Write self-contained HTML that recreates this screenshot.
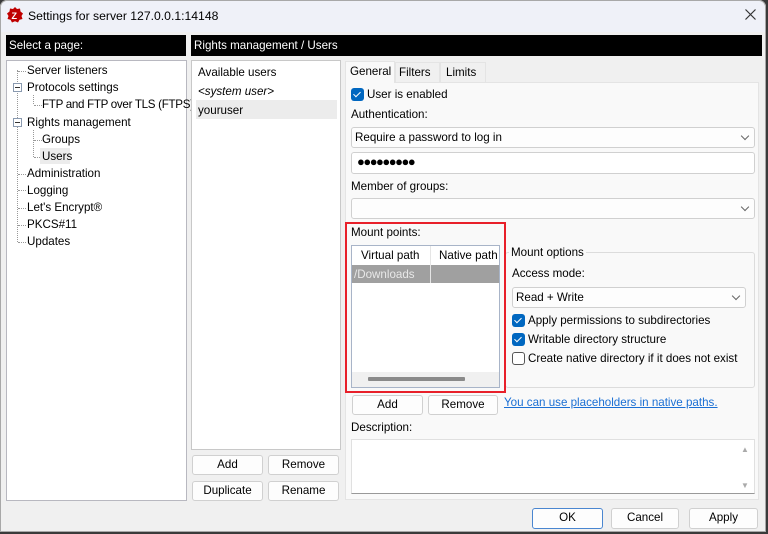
<!DOCTYPE html>
<html><head><style>
*{box-sizing:border-box;margin:0;padding:0}
body{width:768px;height:534px;background:#3a3a3a;font-family:"Liberation Sans",sans-serif;font-size:11.6px;color:#000;position:relative;overflow:hidden}
.a{position:absolute}
.win{position:absolute;left:0;top:0;width:766px;height:532px;background:#f0f0f0;border-radius:7px 7px 0 0;overflow:hidden;box-shadow:inset 0 0 0 1px #a8a8a8}
.t{position:absolute;white-space:nowrap;line-height:14px}
.box{position:absolute;background:#fff;border:1px solid #c8c8c8}
.btn{position:absolute;background:#fdfdfd;border:1px solid #d0d0d0;border-radius:3px;text-align:center;line-height:18px}
.cb{position:absolute;width:13px;height:13px;border-radius:3px;background:#0067c0}
.cb:after{content:"";position:absolute;left:4px;top:2px;width:3px;height:6px;border:solid #fff;border-width:0 1.5px 1.5px 0;transform:rotate(45deg)}
.cbu{position:absolute;width:13px;height:13px;border-radius:3px;border:1px solid #555;background:#fff}
.combo{position:absolute;background:#fdfdfd;border:1px solid #d0d0d0;border-radius:3px}
.chev{position:absolute;right:6px;top:5px;width:6px;height:6px;border:solid #666;border-width:0 1px 1px 0;transform:rotate(45deg)}
.dv{position:absolute;border-left:1px dotted #999}
.dh{position:absolute;border-top:1px dotted #999;width:8px}
.exp{position:absolute;width:9px;height:9px;border:1px solid #8a9ab0;background:#fff}
.exp:after{content:"";position:absolute;left:1px;top:3px;width:5px;height:1px;background:#333}
</style></head><body>
<div class="win">
<div class="a" style="left:1px;top:1px;width:764px;height:31px;background:#eff1f8;border-radius:7px 7px 0 0"></div>
<svg class="a" style="left:7px;top:7px" width="16" height="16" viewBox="0 0 16 16"><polygon points="8,0 10,2 13,1.5 13.5,4.5 16,6.5 14.5,9 15.5,12 12.5,12.8 11,15.5 8,14.3 5,15.5 3.5,12.8 0.5,12 1.5,9 0,6.5 2.5,4.5 3,1.5 6,2" fill="#bf0000"/><text x="4.5" y="12" font-size="9" fill="#fff" font-family="Liberation Sans" font-weight="bold">Z</text></svg>
<div class="t" style="left:28px;top:9px;font-size:12.2px">Settings for server 127.0.0.1:14148</div>
<svg class="a" style="left:745px;top:9px" width="11" height="11" viewBox="0 0 11 11"><path d="M0.5 0.5L10.5 10.5M10.5 0.5L0.5 10.5" stroke="#333" stroke-width="1.2"/></svg>

<div class="a" style="left:6px;top:35px;width:180px;height:21px;background:#000"></div>
<div class="t" style="left:9px;top:39px;color:#fff">Select a page:</div>
<div class="a" style="left:191px;top:35px;width:571px;height:21px;background:#000"></div>
<div class="t" style="left:194px;top:39px;color:#fff">Rights management / Users</div>

<div class="box" style="left:6px;top:60px;width:181px;height:441px;border-color:#b8b8c0"></div>
<div class="dv" style="left:17px;top:70px;height:172px"></div>
<div class="dv" style="left:33px;top:95px;height:9px"></div>
<div class="dv" style="left:33px;top:130px;height:27px"></div>
<div class="dh" style="left:18px;top:71px"></div><div class="dh" style="left:18px;top:190px"></div><div class="dh" style="left:18px;top:174px"></div><div class="dh" style="left:18px;top:208px"></div><div class="dh" style="left:18px;top:225px"></div><div class="dh" style="left:18px;top:242px"></div>
<div class="dh" style="left:34px;top:105px"></div><div class="dh" style="left:34px;top:140px"></div><div class="dh" style="left:34px;top:157px"></div>
<div class="exp" style="left:13px;top:83px"></div><div class="exp" style="left:13px;top:118px"></div>
<div class="t" style="left:27px;top:64px">Server listeners</div>
<div class="t" style="left:27px;top:81px">Protocols settings</div>
<div class="t" style="left:42px;top:98px;letter-spacing:-0.3px">FTP and FTP over TLS (FTPS)</div>
<div class="t" style="left:27px;top:116px">Rights management</div>
<div class="t" style="left:42px;top:133px">Groups</div>
<div class="a" style="left:40px;top:148px;width:30px;height:16px;background:#ececec"></div>
<div class="t" style="left:42px;top:150px">Users</div>
<div class="t" style="left:27px;top:167px">Administration</div>
<div class="t" style="left:27px;top:184px">Logging</div>
<div class="t" style="left:27px;top:201px">Let's Encrypt®</div>
<div class="t" style="left:27px;top:218px">PKCS#11</div>
<div class="t" style="left:27px;top:235px">Updates</div>

<div class="box" style="left:191px;top:60px;width:150px;height:390px"></div>
<div class="t" style="left:198px;top:66px">Available users</div>
<div class="t" style="left:198px;top:85px;font-style:italic">&lt;system user&gt;</div>
<div class="a" style="left:196px;top:100px;width:141px;height:19px;background:#ececec"></div>
<div class="t" style="left:198px;top:104px">youruser</div>
<div class="btn" style="left:192px;top:455px;width:71px;height:20px">Add</div>
<div class="btn" style="left:268px;top:455px;width:71px;height:20px">Remove</div>
<div class="btn" style="left:192px;top:481px;width:71px;height:20px">Duplicate</div>
<div class="btn" style="left:268px;top:481px;width:71px;height:20px">Rename</div>

<div class="a" style="left:345px;top:82px;width:414px;height:418px;background:#f9f9f9;border:1px solid #e4e4e4"></div>
<div class="a" style="left:345px;top:61px;width:50px;height:22px;background:#f9f9f9;border:1px solid #e4e4e4;border-bottom:none"></div>
<div class="a" style="left:395px;top:62px;width:45px;height:20px;border:1px solid #e4e4e4;border-bottom:none"></div>
<div class="a" style="left:440px;top:62px;width:46px;height:20px;border:1px solid #e4e4e4;border-bottom:none"></div>
<div class="t" style="left:350px;top:65px">General</div>
<div class="t" style="left:399px;top:66px">Filters</div>
<div class="t" style="left:446px;top:66px">Limits</div>

<div class="cb" style="left:351px;top:88px"></div>
<div class="t" style="left:367px;top:88px">User is enabled</div>
<div class="t" style="left:351px;top:108px">Authentication:</div>
<div class="combo" style="left:351px;top:127px;width:404px;height:21px"><div class="t" style="left:3px;top:3px">Require a password to log in</div><div class="chev"></div></div>
<div class="combo" style="left:351px;top:152px;width:404px;height:22px;background:#fff"><div class="t" style="left:5px;top:2px;font-size:13px;letter-spacing:-1.5px">●●●●●●●●●</div></div>
<div class="t" style="left:351px;top:180px">Member of groups:</div>
<div class="combo" style="left:351px;top:198px;width:404px;height:21px"><div class="chev"></div></div>

<div class="a" style="left:505px;top:252px;width:250px;height:136px;border:1px solid #dcdcdc;border-radius:3px"></div>
<div class="a t" style="left:509px;top:246px;background:#f9f9f9;padding:0 2px">Mount options</div>
<div class="t" style="left:512px;top:267px">Access mode:</div>
<div class="combo" style="left:512px;top:287px;width:234px;height:21px"><div class="t" style="left:3px;top:3px">Read + Write</div><div class="chev"></div></div>
<div class="cb" style="left:512px;top:314px"></div><div class="t" style="left:528px;top:314px">Apply permissions to subdirectories</div>
<div class="cb" style="left:512px;top:333px"></div><div class="t" style="left:528px;top:333px">Writable directory structure</div>
<div class="cbu" style="left:512px;top:352px"></div><div class="t" style="left:528px;top:352px">Create native directory if it does not exist</div>

<div class="t" style="left:351px;top:226px">Mount points:</div>
<div class="box" style="left:351px;top:245px;width:149px;height:143px;border-color:#a8b4c8"></div>
<div class="a" style="left:352px;top:246px;width:147px;height:19px;background:#fff"></div>
<div class="a" style="left:430px;top:246px;width:1px;height:37px;background:#e5e5e5"></div>
<div class="t" style="left:361px;top:249px">Virtual path</div>
<div class="t" style="left:439px;top:249px">Native path</div>
<div class="a" style="left:352px;top:265px;width:78px;height:18px;background:#a0a0a0"></div>
<div class="a" style="left:431px;top:265px;width:68px;height:18px;background:#a0a0a0"></div>
<div class="t" style="left:354px;top:268px;color:#e8e8e8">/Downloads</div>
<div class="a" style="left:352px;top:372px;width:147px;height:15px;background:#f0f0f0"></div>
<div class="a" style="left:368px;top:377px;width:97px;height:4px;background:#8a8a8a;border-radius:1px"></div>
<div class="a" style="left:345px;top:222px;width:161px;height:171px;border:2px solid #e8202a"></div>

<div class="btn" style="left:352px;top:395px;width:71px;height:20px">Add</div>
<div class="btn" style="left:428px;top:395px;width:70px;height:20px">Remove</div>
<div class="t" style="left:504px;top:396px;color:#1a6fd4;text-decoration:underline">You can use placeholders in native paths.</div>
<div class="t" style="left:351px;top:421px">Description:</div>
<div class="box" style="left:351px;top:439px;width:404px;height:55px;border-color:#e0e0e0;border-bottom-color:#999"></div>
<div class="t" style="left:741px;top:443px;font-size:8px;color:#aaa">▲</div>
<div class="t" style="left:741px;top:479px;font-size:8px;color:#aaa">▼</div>

<div class="btn" style="left:532px;top:508px;width:71px;height:21px;border-color:#4a86d0">OK</div>
<div class="btn" style="left:611px;top:508px;width:68px;height:21px">Cancel</div>
<div class="btn" style="left:689px;top:508px;width:69px;height:21px">Apply</div>
</div>
</body></html>
